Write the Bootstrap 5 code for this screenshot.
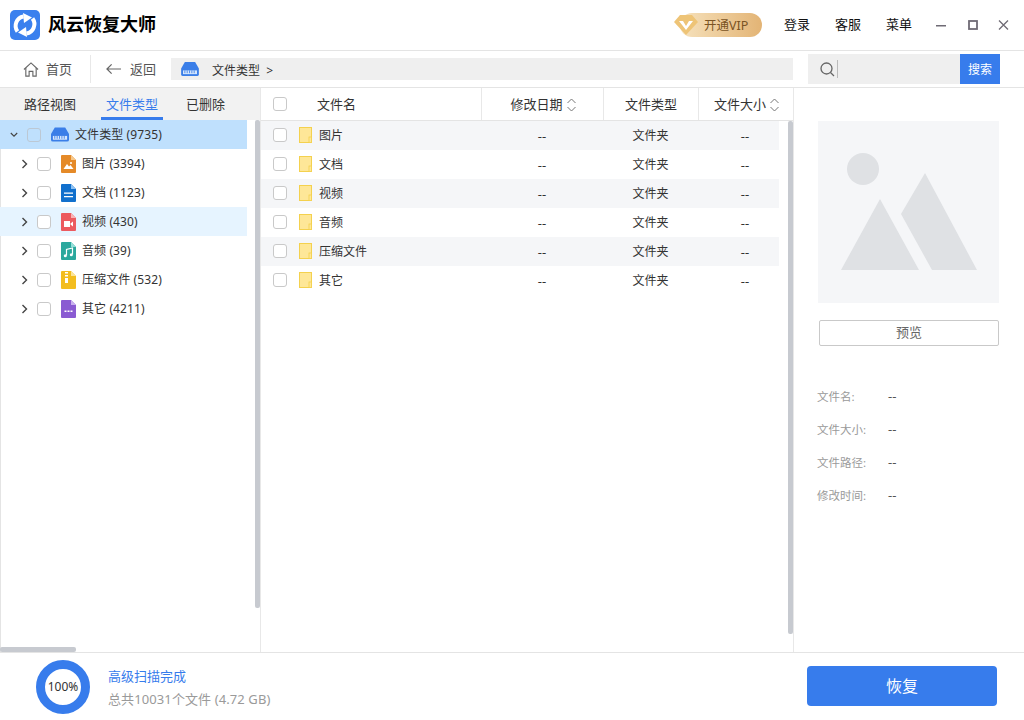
<!DOCTYPE html>
<html lang="zh-CN">
<head>
<meta charset="utf-8">
<title>风云恢复大师</title>
<link href="https://cdn.jsdelivr.net/npm/bootstrap@5.3.0/dist/css/bootstrap.min.css" rel="stylesheet">
<style>
html,body{margin:0;height:720px;overflow:hidden;background:#fff}
body{font-family:"Noto Sans","Noto Sans CJK SC",sans-serif;font-size:13px;color:#333;line-height:1.2}
.app-shell{width:1024px;height:720px}
.title-bar{height:51px;border-bottom:1px solid #e4e4e4;padding-left:10px}
.logo-box{width:30px;height:30px;margin-right:8px;flex:none}
.app-name{font-size:18px;font-weight:700;color:#000}
.vip-pill{width:82px;height:24px;margin-right:22px;position:relative;border-radius:12px;background:linear-gradient(90deg,#f6e2bd,#e3b475);color:#7a5424;font-size:12.5px;padding-left:24px;margin-left:auto;line-height:26px;white-space:nowrap}
.vip-gem{position:absolute;left:-7px;top:1px}
.top-link{font-size:13px;color:#111;margin-right:25px}
.win-btns{gap:20px;margin-left:-1px;margin-right:15px}
.tool-bar{height:37px;border-bottom:1px solid #e4e4e4}
.home-wrap{width:91px;height:28px;padding-left:23px;border-right:1px solid #e8e8e8;color:#555}
.home-wrap span,.back-wrap span{padding-top:2px}
.home-wrap span{margin-left:-1px}
.back-wrap span{margin-left:1px}
.back-wrap{width:80px;padding-left:15px;color:#555}
.crumb{width:622px;height:22px;background:#efefef;padding-left:10px;font-size:12px;color:#333}
.crumb span{margin-left:13px;padding-top:5px}
.search-wrap{margin-left:15px;width:192px;height:30px;background:#efefef}
.search-cursor{width:1px;height:18px;background:#bbb;margin-left:2px}
.search-btn{margin-left:auto;width:40px;height:30px;background:#377cec;color:#fff;font-size:12px;text-align:center;line-height:32px}
.main-area{height:565px;border-bottom:1px solid #e4e4e4}
.left-pane{width:261px;border-left:1px solid #e4e4e4;border-right:1px solid #e8e8e8;position:relative}
.tab-row{height:32px;background:#f2f2f2;padding-left:24px;margin-left:-1px;gap:25px}
.tab-item{font-size:13px;color:#333;height:32px;line-height:32px}
.tab-item.on{padding:0 5px;color:#377cec;border-bottom:3px solid #377cec}
.tab-item.on+.tab-item{margin-left:-2px}
.tree-row{height:29px;width:246px;padding-left:20px;color:#333;font-size:12px;letter-spacing:.1px}
.tree-row>span:last-child{padding-top:2px}
.tree-row.root{background:#bfe0fd;padding-left:10px;margin-left:-1px;width:247px}
.tree-row.hover{background:#e6f4ff;margin-left:-1px;width:247px;padding-left:21px}
.chev{width:8px;height:10px;flex:none}
.check-box{width:14px;height:14px;border:1px solid #c9c9c9;border-radius:3px;background:#fff;flex:none}
.tree-row .check-box{margin-left:8px}
.tree-row.root .check-box{background:transparent;border-color:#bcc8d4;margin-left:9px}
.ficon{width:15px;height:18px;margin-left:10px;margin-right:6px;flex:none}
.disk{width:18px;height:15px;margin-left:10px;margin-right:6px;flex:none}
.vbar{position:absolute;background:#c7cad0;border-radius:2px}
.vbar-left{right:0;top:32px;width:5px;height:488px}
.hbar-left{left:-1px;bottom:0;width:76px;height:5px;background:#c7cad0;border-radius:2px;position:absolute}
.table-pane{width:533px;border-right:1px solid #e8e8e8;position:relative}
.tbl-head{height:33px;border-bottom:1px solid #e4e4e4;display:grid;grid-template-columns:221px 122px 95px 94px;width:532px;color:#333}
.tbl-head>div{border-right:1px solid #e8e8e8;display:flex;align-items:center;justify-content:center;gap:3px;padding-top:1px}
.tbl-head>div:last-child{border-right:0}
.tbl-head>div:first-child{justify-content:flex-start;padding-left:12px}
.tbl-head .check-box{margin-bottom:2px}
.tbl-head .name-lab{margin-left:27px}
.tbl-head svg{margin-right:-2px}
.tbl-row{height:29px;width:518px;display:grid;grid-template-columns:220px 122px 95px 81px;align-items:center;font-size:12px}
.tbl-row:nth-child(odd){background:#f5f6f8}
.tbl-row>div{text-align:center;padding-top:2px}
.tbl-row>div:first-child{display:flex;align-items:center;padding-left:12px;text-align:left}
.tbl-row>div:first-child .check-box{margin-bottom:4px}
.tbl-row>div:last-child{padding-left:13px}
.dash{font-size:13px}
.folder{width:13px;height:16px;margin-left:12px;margin-right:7px;margin-bottom:4px;flex:none}
.vbar-table{right:0;top:33px;width:5px;height:513px}
.detail-pane{width:230px;padding-top:33px;padding-left:24px}
.thumb-box{width:181px;height:182px;background:#f5f6f8}
.preview-btn{width:180px;height:26px;margin:17px 0 0 1px;border:1px solid #c9c9c9;border-radius:2px;text-align:center;line-height:23px;font-size:13px;color:#666;background:#fff}
.meta-list{margin-top:34px;margin-left:-1px}
.meta-row{height:33px;display:flex;align-items:center;font-size:11.5px;color:#9a9a9a}
.meta-row b{font-weight:400;width:71px}
.meta-row i{font-style:normal;color:#555;font-size:13px}
.foot-bar{height:67px;padding-left:36px}
.ring-box{width:54px;height:54px;position:relative;flex:none;margin-top:1px}
.ring-txt{position:absolute;inset:0;display:flex;align-items:center;justify-content:center;font-size:12px;color:#333}
.foot-txt{margin-left:18px;padding-top:3px}
.foot-a{color:#377cec;font-size:13px;margin-bottom:7px}
.foot-b{color:#9a9a9a;font-size:13px;letter-spacing:.1px}
.restore-btn{margin-left:auto;margin-right:27px;margin-bottom:1px;width:190px;height:40px;background:#377cec;color:#fff;border-radius:4px;font-size:16px;border:0}
</style>
</head>
<body>
<div class="app-shell d-flex flex-column">

  <div class="title-bar d-flex align-items-center">
    <svg class="logo-box" viewBox="0 0 30 30"><rect width="30" height="30" rx="5" fill="#3a80ee"/><path d="M7.500 21.500A9.500 9.500 0 0 1 13.500 6.500" fill="none" stroke="#fff" stroke-width="4"/><path d="M13 3l9 4.500-8 5.500z" fill="#fff"/><path d="M22.500 8.500A9.500 9.500 0 0 1 16.500 23.500" fill="none" stroke="#fff" stroke-width="4"/><path d="M17 27l-9-4.500 8-5.500z" fill="#fff"/></svg>
    <div class="app-name">风云恢复大师</div>
    <div class="vip-pill">开通VIP
      <svg class="vip-gem" width="26" height="22" viewBox="0 0 26 22"><path d="M7 1h12l6 7-12 13L1 8z" fill="#eec477"/><path d="M6 7h4l3 5 3-5h4l-7 9z" fill="#fff"/></svg>
    </div>
    <div class="top-link">登录</div>
    <div class="top-link">客服</div>
    <div class="top-link">菜单</div>
    <div class="win-btns d-flex align-items-center">
      <svg width="11" height="11" viewBox="0 0 11 11"><rect x="0" y="5" width="10" height="1.500" fill="#6f6b75"/></svg>
      <svg width="11" height="11" viewBox="0 0 11 11"><rect x="2" y="1" width="8" height="8" fill="none" stroke="#6f6b75" stroke-width="1.800"/></svg>
      <svg width="11" height="11" viewBox="0 0 11 11"><path d="M1 0.500l9 9M10 0.500l-9 9" stroke="#6f6b75" stroke-width="1.300"/></svg>
    </div>
  </div>

  <div class="tool-bar d-flex align-items-center">
    <div class="home-wrap d-flex align-items-center gap-2">
      <svg width="16" height="17" viewBox="0 0 17 17" fill="none" stroke="#666" stroke-width="1.200"><path d="M1 8.500L8.500 1.500 16 8.500"/><path d="M3 7v8.500h3.500V10.500h4v5H14V7"/></svg>
      <span>首页</span>
    </div>
    <div class="back-wrap d-flex align-items-center gap-2">
      <svg width="15" height="12" viewBox="0 0 16 12" fill="none" stroke="#666" stroke-width="1.300"><path d="M6 1L1 6l5 5M1 6h15"/></svg>
      <span>返回</span>
    </div>
    <div class="crumb d-flex align-items-center">
      <svg width="18" height="14" viewBox="0 0 19 15"><path d="M4 0h11l4 7v6a2 2 0 0 1-2 2H2a2 2 0 0 1-2-2V7z" fill="#3a7ee8"/><rect x="2" y="9" width="15" height="4" fill="#d4e6fd"/><path d="M4 9v3M6.500 9v3M9 9v3M11.500 9v3M14 9v3" stroke="#3a7ee8" stroke-width=".9"/></svg>
      <span>文件类型 &nbsp;&gt;</span>
    </div>
    <div class="search-wrap d-flex align-items-center ps-2">
      <svg class="ms-1" width="15" height="15" viewBox="0 0 15 15" fill="none" stroke="#666" stroke-width="1.300"><circle cx="6.500" cy="6.500" r="5.500"/><path d="M10.500 10.500L14 14"/></svg>
      <span class="search-cursor"></span>
      <div class="search-btn">搜索</div>
    </div>
  </div>

  <div class="main-area d-flex">
    <div class="left-pane">
      <div class="tab-row d-flex">
        <div class="tab-item">路径视图</div>
        <div class="tab-item on">文件类型</div>
        <div class="tab-item">已删除</div>
      </div>
      <div class="tree-row root d-flex align-items-center">
        <svg class="chev" viewBox="0 0 10 8" fill="none" stroke="#444" stroke-width="1.400"><path d="M1 1.500l4 4 4-4"/></svg>
        <span class="check-box"></span>
        <svg class="disk" viewBox="0 0 19 15"><path d="M4 0h11l4 7v6a2 2 0 0 1-2 2H2a2 2 0 0 1-2-2V7z" fill="#3a7ee8"/><rect x="2" y="9" width="15" height="4" fill="#d4e6fd"/><path d="M4 9v3M6.500 9v3M9 9v3M11.500 9v3M14 9v3" stroke="#3a7ee8" stroke-width=".9"/></svg>
        <span>文件类型 (9735)</span>
      </div>
      <div class="tree-row d-flex align-items-center">
        <svg class="chev" viewBox="0 0 8 10" fill="none" stroke="#444" stroke-width="1.400"><path d="M1.500 1l4 4-4 4"/></svg>
        <span class="check-box"></span>
        <svg class="ficon" viewBox="0 0 15 18"><path d="M1 0h9l5 5v12a1 1 0 0 1-1 1H1a1 1 0 0 1-1-1V1a1 1 0 0 1 1-1z" fill="#e58a28"/><path d="M10 0l5 5h-5z" fill="#f6c88c"/><path d="M2.500 14l3.500-5 2 2.500 1.500-1.500 3 4z" fill="#fff"/><circle cx="10" cy="8" r="1" fill="#fff"/></svg>
        <span>图片 (3394)</span>
      </div>
      <div class="tree-row d-flex align-items-center">
        <svg class="chev" viewBox="0 0 8 10" fill="none" stroke="#444" stroke-width="1.400"><path d="M1.500 1l4 4-4 4"/></svg>
        <span class="check-box"></span>
        <svg class="ficon" viewBox="0 0 15 18"><path d="M1 0h9l5 5v12a1 1 0 0 1-1 1H1a1 1 0 0 1-1-1V1a1 1 0 0 1 1-1z" fill="#1170cd"/><path d="M10 0l5 5h-5z" fill="#8fc2f2"/><path d="M3 8.500h9v1.200H3zM3 12h9v1.200H3z" fill="#fff"/></svg>
        <span>文档 (1123)</span>
      </div>
      <div class="tree-row hover d-flex align-items-center">
        <svg class="chev" viewBox="0 0 8 10" fill="none" stroke="#444" stroke-width="1.400"><path d="M1.500 1l4 4-4 4"/></svg>
        <span class="check-box"></span>
        <svg class="ficon" viewBox="0 0 15 18"><path d="M1 0h9l5 5v12a1 1 0 0 1-1 1H1a1 1 0 0 1-1-1V1a1 1 0 0 1 1-1z" fill="#ec5a5f"/><path d="M10 0l5 5h-5z" fill="#f9b3b5"/><path d="M3 8h6v6H3zM9.500 10.500l2.500-2v5l-2.500-2z" fill="#fff"/></svg>
        <span>视频 (430)</span>
      </div>
      <div class="tree-row d-flex align-items-center">
        <svg class="chev" viewBox="0 0 8 10" fill="none" stroke="#444" stroke-width="1.400"><path d="M1.500 1l4 4-4 4"/></svg>
        <span class="check-box"></span>
        <svg class="ficon" viewBox="0 0 15 18"><path d="M1 0h9l5 5v12a1 1 0 0 1-1 1H1a1 1 0 0 1-1-1V1a1 1 0 0 1 1-1z" fill="#2aa89d"/><path d="M10 0l5 5h-5z" fill="#93e0d9"/><path d="M5.500 13.500V7.500l6-1.500v6.500" fill="none" stroke="#fff" stroke-width="1.200"/><circle cx="4.300" cy="13.800" r="1.500" fill="#fff"/><circle cx="10.300" cy="12.800" r="1.500" fill="#fff"/></svg>
        <span>音频 (39)</span>
      </div>
      <div class="tree-row d-flex align-items-center">
        <svg class="chev" viewBox="0 0 8 10" fill="none" stroke="#444" stroke-width="1.400"><path d="M1.500 1l4 4-4 4"/></svg>
        <span class="check-box"></span>
        <svg class="ficon" viewBox="0 0 15 18"><path d="M1 0h9l5 5v12a1 1 0 0 1-1 1H1a1 1 0 0 1-1-1V1a1 1 0 0 1 1-1z" fill="#f3bd1f"/><path d="M10 0l5 5h-5z" fill="#fbe59a"/><path d="M4 1h3v1.500H4zM4 4h3v1.500H4zM4 7h3v5H4z" fill="#fff"/></svg>
        <span>压缩文件 (532)</span>
      </div>
      <div class="tree-row d-flex align-items-center">
        <svg class="chev" viewBox="0 0 8 10" fill="none" stroke="#444" stroke-width="1.400"><path d="M1.500 1l4 4-4 4"/></svg>
        <span class="check-box"></span>
        <svg class="ficon" viewBox="0 0 15 18"><path d="M1 0h9l5 5v12a1 1 0 0 1-1 1H1a1 1 0 0 1-1-1V1a1 1 0 0 1 1-1z" fill="#8a5bd2"/><path d="M10 0l5 5h-5z" fill="#c9b1ee"/><path d="M3.500 10.500h2v1.500h-2zM6.500 10.500h2v1.500h-2zM9.500 10.500h2v1.500h-2z" fill="#fff"/></svg>
        <span>其它 (4211)</span>
      </div>
      <div class="vbar vbar-left"></div>
      <div class="hbar-left"></div>
    </div>

    <div class="table-pane">
      <div class="tbl-head">
        <div><span class="check-box"></span><span class="name-lab">文件名</span></div>
        <div>修改日期<svg width="11" height="16" viewBox="0 0 10 16" fill="none" stroke="#777"><path d="M1 6l4-4 4 4M1 10l4 4 4-4"/></svg></div>
        <div>文件类型</div>
        <div>文件大小<svg width="11" height="16" viewBox="0 0 10 16" fill="none" stroke="#777"><path d="M1 6l4-4 4 4M1 10l4 4 4-4"/></svg></div>
      </div>
      <div>
        <div class="tbl-row"><div><span class="check-box"></span><svg class="folder" viewBox="0 0 13 16"><rect x=".5" y=".5" width="12" height="15" fill="#fee798" stroke="#f4d14e"/><rect x="10" y="10" width="2.500" height="5.500" fill="#fee798" stroke="#f4d14e" stroke-width=".8"/></svg>图片</div><div class="dash">--</div><div>文件夹</div><div class="dash">--</div></div>
        <div class="tbl-row"><div><span class="check-box"></span><svg class="folder" viewBox="0 0 13 16"><rect x=".5" y=".5" width="12" height="15" fill="#fee798" stroke="#f4d14e"/><rect x="10" y="10" width="2.500" height="5.500" fill="#fee798" stroke="#f4d14e" stroke-width=".8"/></svg>文档</div><div class="dash">--</div><div>文件夹</div><div class="dash">--</div></div>
        <div class="tbl-row"><div><span class="check-box"></span><svg class="folder" viewBox="0 0 13 16"><rect x=".5" y=".5" width="12" height="15" fill="#fee798" stroke="#f4d14e"/><rect x="10" y="10" width="2.500" height="5.500" fill="#fee798" stroke="#f4d14e" stroke-width=".8"/></svg>视频</div><div class="dash">--</div><div>文件夹</div><div class="dash">--</div></div>
        <div class="tbl-row"><div><span class="check-box"></span><svg class="folder" viewBox="0 0 13 16"><rect x=".5" y=".5" width="12" height="15" fill="#fee798" stroke="#f4d14e"/><rect x="10" y="10" width="2.500" height="5.500" fill="#fee798" stroke="#f4d14e" stroke-width=".8"/></svg>音频</div><div class="dash">--</div><div>文件夹</div><div class="dash">--</div></div>
        <div class="tbl-row"><div><span class="check-box"></span><svg class="folder" viewBox="0 0 13 16"><rect x=".5" y=".5" width="12" height="15" fill="#fee798" stroke="#f4d14e"/><rect x="10" y="10" width="2.500" height="5.500" fill="#fee798" stroke="#f4d14e" stroke-width=".8"/></svg>压缩文件</div><div class="dash">--</div><div>文件夹</div><div class="dash">--</div></div>
        <div class="tbl-row"><div><span class="check-box"></span><svg class="folder" viewBox="0 0 13 16"><rect x=".5" y=".5" width="12" height="15" fill="#fee798" stroke="#f4d14e"/><rect x="10" y="10" width="2.500" height="5.500" fill="#fee798" stroke="#f4d14e" stroke-width=".8"/></svg>其它</div><div class="dash">--</div><div>文件夹</div><div class="dash">--</div></div>
      </div>
      <div class="vbar vbar-table"></div>
    </div>

    <div class="detail-pane">
      <div class="thumb-box">
        <svg width="181" height="182" viewBox="0 0 181 182"><circle cx="45" cy="48" r="16" fill="#dfe1e4"/><path d="M23 149l39-71 39 71z" fill="#dfe1e4"/><path d="M83 93l24-41 52 97h-45z" fill="#dfe1e4"/></svg>
      </div>
      <div class="preview-btn">预览</div>
      <div class="meta-list">
        <div class="meta-row"><b>文件名:</b><i>--</i></div>
        <div class="meta-row"><b>文件大小:</b><i>--</i></div>
        <div class="meta-row"><b>文件路径:</b><i>--</i></div>
        <div class="meta-row"><b>修改时间:</b><i>--</i></div>
      </div>
    </div>
  </div>

  <div class="foot-bar d-flex align-items-center">
    <div class="ring-box">
      <svg width="54" height="54" viewBox="0 0 54 54"><circle cx="27" cy="27" r="22.500" fill="none" stroke="#377cec" stroke-width="9"/></svg>
      <div class="ring-txt">100%</div>
    </div>
    <div class="foot-txt">
      <div class="foot-a">高级扫描完成</div>
      <div class="foot-b">总共10031个文件 (4.72 GB)</div>
    </div>
    <button type="button" class="restore-btn btn">恢复</button>
  </div>
</div>
<script src="https://cdn.jsdelivr.net/npm/bootstrap@5.3.0/dist/js/bootstrap.bundle.min.js"></script>
</body>
</html>
